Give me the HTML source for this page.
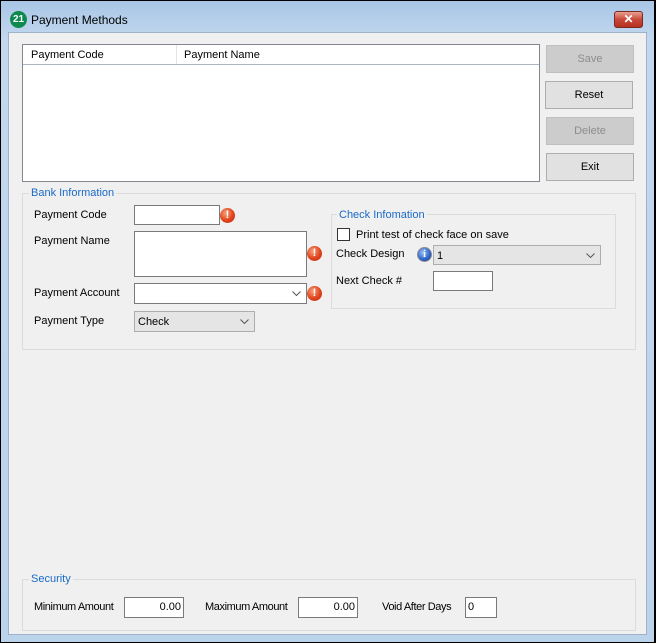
<!DOCTYPE html>
<html><head><style>
*{margin:0;padding:0;box-sizing:border-box}
body{width:656px;height:643px;background:#000;position:relative;overflow:hidden;font-family:"Liberation Sans",sans-serif;font-size:11px;color:#000}
.a{position:absolute}
#frame{left:1px;top:1px;width:653px;height:641px;background:linear-gradient(#a9c6e6,#c3d8ef 40px,#bcd3ec);}
#client{left:8px;top:32px;width:639px;height:603px;background:#f0f0f0;border:1px solid #9fb2c8}
.t{position:absolute;white-space:nowrap;line-height:14px}
.box{position:absolute;background:#fff;border:1px solid #7a7a7a}
.grp{position:absolute;border:1px solid #dcdcdc}
.lg{position:absolute;background:#f0f0f0;color:#1a6ac8;padding:0 2px;line-height:14px;white-space:nowrap}
.btn{position:absolute;border:1px solid #adadad;background:#e1e1e1;text-align:center;line-height:26px}
.dis{color:#8d8d8d;background:#cccccc;border-color:#bfbfbf}
.err{position:absolute;width:15px;height:15px;border-radius:50%;background:radial-gradient(circle at 40% 35%,#f7a07a,#e0431c 55%,#b32b10);color:#fff;font-weight:bold;font-size:11px;text-align:center;line-height:15px}
.cmb{position:absolute;border:1px solid #7a7a7a;background:#fff}
.cmb svg{position:absolute;right:5px;top:7px}
.sq{letter-spacing:-0.4px}
</style></head><body>
<div class="a" id="frame"></div>
<div class="a" style="left:10px;top:11px;width:17px;height:17px;border-radius:50%;background:#0f8a4e;color:#fff;font-size:10px;font-weight:bold;text-align:center;line-height:17px">21</div>
<div class="t" style="left:31px;top:13px;font-size:12px">Payment Methods</div>
<div class="a" style="left:614px;top:11px;width:29px;height:17px;border:1px solid #7a2a20;border-radius:3px;background:linear-gradient(#e8a090,#c9493a 50%,#b5301f);color:#fff;text-align:center;font-weight:bold;font-size:12px;line-height:15px">✕</div>
<div class="a" id="client"></div>

<div class="box" style="left:22px;top:44px;width:518px;height:138px;border-color:#828790"></div>
<div class="a" style="left:23px;top:45px;width:516px;height:20px;background:#fff;border-bottom:1px solid #aeb6c2"></div>
<div class="a" style="left:176px;top:45px;width:1px;height:19px;background:#e5e5e5"></div>
<div class="t" style="left:31px;top:48px">Payment Code</div>
<div class="t" style="left:184px;top:48px">Payment Name</div>

<div class="btn dis" style="left:546px;top:45px;width:88px;height:28px">Save</div>
<div class="btn" style="left:545px;top:81px;width:88px;height:28px">Reset</div>
<div class="btn dis" style="left:546px;top:117px;width:88px;height:28px">Delete</div>
<div class="btn" style="left:546px;top:153px;width:88px;height:28px">Exit</div>

<div class="grp" style="left:22px;top:193px;width:614px;height:157px"></div>
<div class="lg" style="left:29px;top:186px">Bank Information</div>
<div class="t" style="left:34px;top:208px">Payment Code</div>
<div class="box" style="left:134px;top:205px;width:86px;height:20px"></div>
<div class="err" style="left:220px;top:208px">!</div>
<div class="t" style="left:34px;top:234px">Payment Name</div>
<div class="box" style="left:134px;top:231px;width:173px;height:46px"></div>
<div class="err" style="left:307px;top:246px">!</div>
<div class="t" style="left:34px;top:286px">Payment Account</div>
<div class="cmb" style="left:134px;top:283px;width:173px;height:21px"><svg width="9" height="5"><path d="M0.5 0.5L4.5 4.5L8.5 0.5" fill="none" stroke="#555"/></svg></div>
<div class="err" style="left:307px;top:286px">!</div>
<div class="t" style="left:34px;top:314px">Payment Type</div>
<div class="cmb" style="left:134px;top:311px;width:121px;height:21px;background:#e5e5e5;border-color:#adadad"><svg width="9" height="5"><path d="M0.5 0.5L4.5 4.5L8.5 0.5" fill="none" stroke="#555"/></svg><div class="t" style="left:3px;top:3px">Check</div></div>

<div class="grp" style="left:331px;top:214px;width:285px;height:95px"></div>
<div class="lg" style="left:337px;top:208px">Check Infomation</div>
<div class="a" style="left:337px;top:228px;width:13px;height:13px;border:1px solid #333;background:#fff"></div>
<div class="t" style="left:356px;top:228px">Print test of check face on save</div>
<div class="t" style="left:336px;top:247px">Check Design</div>
<div class="a" style="left:417px;top:247px;width:15px;height:15px;border-radius:50%;background:radial-gradient(circle at 40% 35%,#9ec4f5,#2a63c6 60%,#1b3f8a);border:1px solid #889;color:#fff;font-weight:bold;font-size:10px;text-align:center;line-height:13px;font-family:'Liberation Serif',serif">i</div>
<div class="cmb" style="left:433px;top:245px;width:168px;height:20px;background:#e5e5e5;border-color:#adadad"><svg width="9" height="5"><path d="M0.5 0.5L4.5 4.5L8.5 0.5" fill="none" stroke="#555"/></svg><div class="t" style="left:3px;top:3px">1</div></div>
<div class="t" style="left:336px;top:274px">Next Check #</div>
<div class="box" style="left:433px;top:271px;width:60px;height:20px"></div>

<div class="grp" style="left:22px;top:579px;width:614px;height:52px"></div>
<div class="lg" style="left:29px;top:572px">Security</div>
<div class="t sq" style="left:34px;top:600px">Minimum Amount</div>
<div class="box" style="left:124px;top:597px;width:60px;height:21px"><div class="t" style="right:2px;top:2px">0.00</div></div>
<div class="t sq" style="left:205px;top:600px">Maximum Amount</div>
<div class="box" style="left:298px;top:597px;width:60px;height:21px"><div class="t" style="right:2px;top:2px">0.00</div></div>
<div class="t sq" style="left:382px;top:600px">Void After Days</div>
<div class="box" style="left:465px;top:597px;width:32px;height:21px"><div class="t" style="left:2px;top:2px">0</div></div>
</body></html>
